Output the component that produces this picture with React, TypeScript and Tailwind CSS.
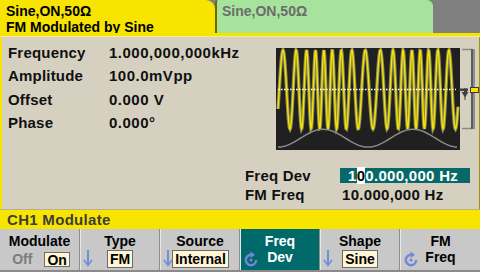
import React from 'react';

function Scope() {
  const fc = 0.093;
  const fd = 0.028;
  const a7 = Math.sin((2 * Math.PI * 7) / 95);
  const wave: string[] = [];
  for (let x = 2; x <= 182; x += 0.5) {
    const integ = -(95 / (2 * Math.PI)) * (Math.sin((2 * Math.PI * x) / 95) - a7);
    const ph = 2 * Math.PI * (fc * (x - 7) + fd * integ);
    wave.push(`${x},${(41.5 - 39.5 * Math.cos(ph)).toFixed(2)}`);
  }
  const mod: string[] = [];
  for (let x = 2; x <= 181; x += 1) {
    mod.push(`${x},${(90.2 + 8.9 * Math.cos((2 * Math.PI * (x - 2)) / 90)).toFixed(2)}`);
  }

  return (
    <svg width="203" height="104" viewBox="0 0 203 104" className="mt-[11px] shrink-0">
      <rect x="0" y="0" width="184" height="102" fill="#202020" />
      <polyline points={mod.join(' ')} fill="none" stroke="#8a8a8a" strokeWidth="1.5" />
      <polyline points={wave.join(' ')} fill="none" stroke="#8c8a58" strokeWidth="3.4" />
      <polyline points={wave.join(' ')} fill="none" stroke="#f5e400" strokeWidth="1.4" />
      <line x1="2" y1="41.5" x2="180" y2="41.5" stroke="#ffffff" strokeWidth="1.5" strokeDasharray="1.5 1.5" />
      {/* amplitude scale */}
      <line x1="186" y1="1.5" x2="196" y2="1.5" stroke="#8a8a8a" strokeWidth="1.5" />
      <line x1="186" y1="80.5" x2="196" y2="80.5" stroke="#8a8a8a" strokeWidth="1.5" />
      <rect x="195" y="1" width="2" height="80" fill="#5c5c5c" />
      <rect x="197" y="1" width="2" height="80" fill="#8e8e8e" />
      <rect x="183" y="40.5" width="9" height="2.5" fill="#404040" />
      <rect x="188" y="40.5" width="3" height="5" fill="#404040" />
      <polygon points="185.5,44 192.5,44 189,49.5" fill="#404040" />
      <rect x="188.5" y="48" width="1" height="4" fill="#404040" />
      <rect x="194.5" y="39.5" width="8" height="5" fill="#f7e500" stroke="#3a3a3a" strokeWidth="1" />
    </svg>
  );
}

function DownArrow() {
  return (
    <svg width="10" height="17" viewBox="0 0 10 17" className="absolute left-[2px] bottom-[3px]">
      <rect x="4" y="0" width="2" height="15" fill="#6f8fd8" />
      <polyline points="1,10 5,15.5 9,10" fill="none" stroke="#6f8fd8" strokeWidth="1.6" />
    </svg>
  );
}

function Spin() {
  return (
    <svg width="16" height="16" viewBox="0 0 16 16" className="absolute left-[2px] bottom-[3px]">
      <path d="M8 3.8 A5.2 5.2 0 1 0 13.2 9" fill="none" stroke="#7585d8" strokeWidth="2.4" />
      <polygon points="7.5,0.5 12,3.8 7.5,7" fill="#7585d8" />
      <circle cx="8" cy="9" r="1.6" fill="#7585d8" />
    </svg>
  );
}

const box = 'h-[15px] leading-[14px] px-[2px] bg-[#fff6d6] border border-[#6c6c6c] text-[14px] font-bold text-black';

export default function App() {
  return (
    <div className="w-[480px] h-[272px] overflow-hidden flex flex-col bg-[#808080] font-['Liberation_Sans',Arial,sans-serif] text-[#101010]">
      {/* tabs */}
      <div className="flex h-[33px] shrink-0">
        <div className="w-[215px] bg-[#f7e500] rounded-tr-[9px] pl-[6px] pt-[3px] text-[14px] font-bold leading-[16px] text-black">
          <div>Sine,ON,50Ω</div>
          <div>FM Modulated by Sine</div>
        </div>
        <div className="w-[218px] bg-[#a6e49e] rounded-tr-[6px] rounded-tl-[3px] border-l-2 border-[#6e6800] pl-[5px] pt-[3px] text-[14px] font-bold leading-[16px] text-[#6c6c6c]">
          Sine,ON,50Ω
        </div>
      </div>
      <div className="h-[3px] bg-[#f7e500] shrink-0" />
      <div className="h-[1px] bg-[#f2ec9c] shrink-0" />

      {/* main panel */}
      <div className="h-[172px] shrink-0 bg-[#d6d0c0] border-l-2 border-r border-l-[#f7e500] border-r-[#a09400] flex flex-col">
        <div className="h-[131px] flex">
          <div className="w-[274px] pl-[6px] pt-[4px] text-[15px] font-bold">
            {[
              ['Frequency', '1.000,000,000kHz'],
              ['Amplitude', '100.0mVpp'],
              ['Offset', '0.000 V'],
              ['Phase', '0.000°'],
            ].map(([k, v]) => (
              <div key={k} className="flex h-[23.4px] leading-[23px]">
                <span className="w-[101px] tracking-[0.2px]">{k}</span>
                <span className="tracking-[0.5px] whitespace-nowrap">{v}</span>
              </div>
            ))}
          </div>
          <Scope />
        </div>
        <div className="pl-[243px] text-[15px] font-bold flex flex-col gap-[4px]">
          <div className="flex h-[15px] leading-[15px]">
            <span className="w-[95px] tracking-[0.2px]">Freq Dev</span>
            <span className="w-[130px] bg-[#066868] text-white pl-[8px] tracking-[0.3px]">
              1<span className="bg-white text-black">0</span>0.000,000 Hz
            </span>
          </div>
          <div className="flex h-[15px] leading-[15px]">
            <span className="w-[97px] tracking-[0.2px]">FM Freq</span>
            <span className="tracking-[0.3px]">10.000,000 Hz</span>
          </div>
        </div>
      </div>

      {/* menu title */}
      <div className="h-[20px] shrink-0 bg-[#f7e500] border-t border-[#b8b090] pl-[7px] text-[15px] font-bold leading-[19px] text-[#3c3c3c] tracking-[0.3px]">
        CH1 Modulate
      </div>

      {/* softkeys */}
      <div className="h-[43px] shrink-0 flex bg-[#c8c8c8] border-b-2 border-[#8a8a8a] text-[14px] font-bold leading-[16px] text-black">
        <div className="relative w-[80px] flex flex-col items-center pt-[4px] border-r border-[#8e8e8e]">
          <div>Modulate</div>
          <div className="mt-[2px] flex items-center gap-[12px] pl-[3px]">
            <span className="text-[#7c7c7c]">Off</span>
            <span className={box}>On</span>
          </div>
        </div>
        <div className="relative w-[80px] flex flex-col items-center pt-[4px] border-x border-l-[#e8e8e8] border-r-[#8e8e8e]">
          <div>Type</div>
          <div className="mt-[2px]"><span className={box}>FM</span></div>
          <DownArrow />
        </div>
        <div className="relative w-[80px] flex flex-col items-center pt-[4px] border-x border-l-[#e8e8e8] border-r-[#8e8e8e]">
          <div>Source</div>
          <div className="mt-[2px] pl-[1px]"><span className={box}>Internal</span></div>
          <DownArrow />
        </div>
        <div className="relative w-[80px] flex flex-col items-center pt-[4px] bg-[#006a6a] text-white border-x border-l-[#e8e8e8] border-r-[#8e8e8e]">
          <div>Freq</div>
          <div>Dev</div>
          <Spin />
        </div>
        <div className="relative w-[80px] flex flex-col items-center pt-[4px] border-x border-l-[#e8e8e8] border-r-[#8e8e8e]">
          <div>Shape</div>
          <div className="mt-[2px]"><span className={box}>Sine</span></div>
          <DownArrow />
        </div>
        <div className="relative w-[80px] flex flex-col items-center pt-[4px] border-l border-[#e8e8e8]">
          <div>FM</div>
          <div>Freq</div>
          <Spin />
        </div>
      </div>
    </div>
  );
}
